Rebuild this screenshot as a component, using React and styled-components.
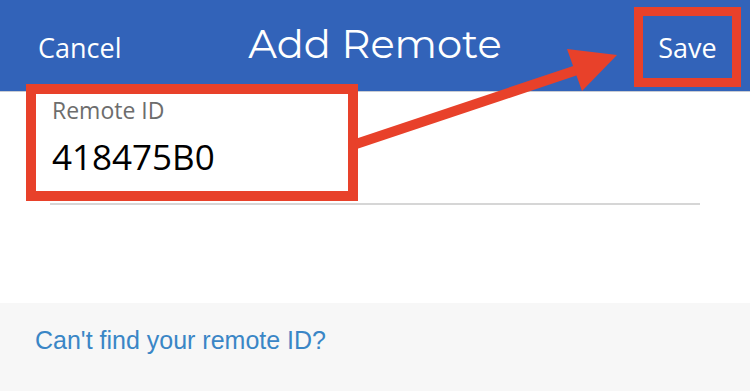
import styled, { createGlobalStyle } from "styled-components";

const GlobalStyle = createGlobalStyle`
  html, body {
    margin: 0;
    padding: 0;
    background: #fff;
  }
  body {
    font-family: "Open Sans", "Noto Sans", sans-serif;
  }
`;

const Page = styled.div`
  position: relative;
  width: 750px;
  height: 391px;
  overflow: hidden;
  display: flex;
  flex-direction: column;
  background: #fff;
`;

const Header = styled.header`
  height: 91px;
  flex-shrink: 0;
  display: grid;
  grid-template-columns: 1fr auto 1fr;
  align-items: center;
  background: #3263b9;
  border-bottom: 1px solid #c9ccd3;
`;

const NavButton = styled.span`
  font-size: 27px;
  line-height: 1;
  color: #fff;
  justify-self: ${(p) => (p.right ? "end" : "start")};
  padding-left: ${(p) => (p.right ? "0" : "38px")};
  padding-top: ${(p) => (p.right ? "0" : "3px")};
`;

const Title = styled.h1`
  margin: 0 0 3px;
  font-family: "Montserrat", "DejaVu Sans", sans-serif;
  font-weight: 400;
  font-size: 40px;
  line-height: 1;
  color: #fff;
`;

const Highlight = styled.div`
  box-sizing: border-box;
  border: ${(p) => p.thick}px solid #e8412a;
`;

const SaveBox = styled(Highlight)`
  justify-self: end;
  align-self: start;
  margin: 7px 9px 0 0;
  width: 107px;
  height: 80px;
  display: flex;
  align-items: center;
  justify-content: center;
`;

const Form = styled.section`
  padding: 0 50px;
  margin-top: -8px;
  position: relative;
`;

const Field = styled.div`
  padding-bottom: 2px;
  border-bottom: 2px solid #d6d6d6;
`;

const FieldBox = styled(Highlight)`
  margin-left: -24px;
  width: 332px;
  height: 117px;
  padding: 5px 0 0 16px;
  display: flex;
  flex-direction: column;
  gap: 17px;
`;

const Label = styled.div`
  font-size: 23px;
  line-height: 1;
  color: #6d6d6d;
`;

const Value = styled.div`
  font-size: 35px;
  line-height: 1;
  color: #000;
`;

const Footer = styled.footer`
  margin-top: auto;
  height: 88px;
  box-sizing: border-box;
  background: #f7f7f7;
  padding: 25px 0 0 35px;
`;

const HelpLink = styled.a`
  font-family: "Liberation Sans", Arial, sans-serif;
  font-size: 25px;
  line-height: 1;
  color: #3a86c6;
  text-decoration: none;
`;

const ArrowOverlay = styled.svg`
  position: absolute;
  left: 0;
  top: 0;
  pointer-events: none;
`;

export default function App() {
  return (
    <>
      <GlobalStyle />
      <Page>
        <Header>
          <NavButton>Cancel</NavButton>
          <Title>Add Remote</Title>
          <SaveBox thick={9}>
            <NavButton right>Save</NavButton>
          </SaveBox>
        </Header>
        <Form>
          <Field>
            <FieldBox thick={10}>
              <Label>Remote ID</Label>
              <Value>418475B0</Value>
            </FieldBox>
          </Field>
        </Form>
        <Footer>
          <HelpLink href="#">Can't find your remote ID?</HelpLink>
        </Footer>
        <ArrowOverlay width="750" height="391" viewBox="0 0 750 391">
          <line x1="356" y1="144" x2="580" y2="69" stroke="#e8412a" strokeWidth="10" />
          <polygon points="567,49 617,55 582,91" fill="#e8412a" />
        </ArrowOverlay>
      </Page>
    </>
  );
}
